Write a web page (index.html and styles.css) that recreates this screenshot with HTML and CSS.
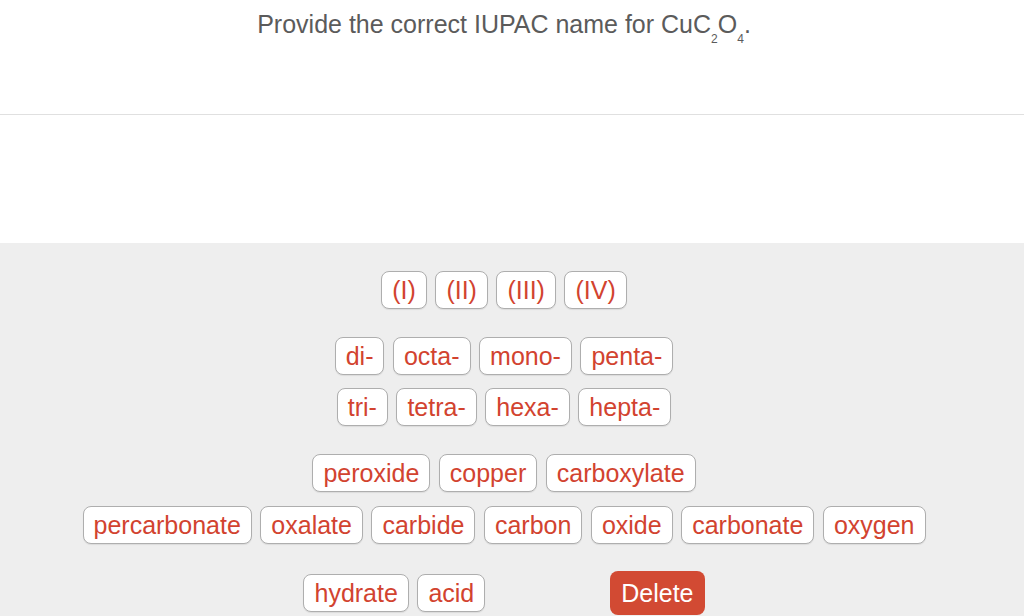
FILE: index.html
```html
<!DOCTYPE html>
<html lang="en">
  <head>
    <meta charset="UTF-8" />
    <title>IUPAC name</title>
    <link rel="stylesheet" href="styles.css">
  </head>
  <body>
    <!-- Question -->
    <div class="question">
      <p class="prompt">Provide the correct IUPAC name for CuC<sub>2</sub>O<sub>4</sub>.</p>
    </div>

    <!-- Answer drop area -->
    <div class="answer"></div>

    <!-- Tile palette -->
    <div class="palette">
      <div class="group">
        <div class="row">
          <span class="tile">(I)</span>
          <span class="tile">(II)</span>
          <span class="tile">(III)</span>
          <span class="tile">(IV)</span>
        </div>
      </div>

      <div class="group">
        <div class="row">
          <span class="tile">di-</span>
          <span class="tile">octa-</span>
          <span class="tile">mono-</span>
          <span class="tile">penta-</span>
        </div>
        <div class="row">
          <span class="tile">tri-</span>
          <span class="tile">tetra-</span>
          <span class="tile">hexa-</span>
          <span class="tile">hepta-</span>
        </div>
      </div>

      <div class="group group-names">
        <div class="row">
          <span class="tile">peroxide</span>
          <span class="tile">copper</span>
          <span class="tile">carboxylate</span>
        </div>
        <div class="row">
          <span class="tile">percarbonate</span>
          <span class="tile">oxalate</span>
          <span class="tile">carbide</span>
          <span class="tile">carbon</span>
          <span class="tile">oxide</span>
          <span class="tile">carbonate</span>
          <span class="tile">oxygen</span>
        </div>
      </div>

      <div class="group group-last">
        <div class="row">
          <span class="tile">hydrate</span>
          <span class="tile">acid</span>
        </div>
        <button class="delete">Delete</button>
      </div>
    </div>
  </body>
</html>
```

FILE: styles.css
```css
* {
  margin: 0;
  padding: 0;
  box-sizing: border-box;
}

html,
body {
  height: 100%;
}

body {
  display: flex;
  flex-direction: column;
  font-family: 'Liberation Sans', Arial, sans-serif;
  background-color: #fff;
  overflow: hidden;
}

/* Question text at the top */
.question {
  flex-shrink: 0;
  height: 115px;
  border-bottom: 1px solid #e0e0e0;
  padding-right: 16px;
  text-align: center;
}

.prompt {
  padding-top: 9px;
  font-size: 25px;
  line-height: 30px;
  color: #5b5b5b;
}

.prompt sub {
  font-size: 12px;
  vertical-align: -10px;
  line-height: 0;
}

.answer {
  flex-shrink: 0;
  height: 128px;
}

/* Grey area holding the tiles */
.palette {
  flex: 1 0 auto;
  padding: 28px 16px 0 0;
  background: linear-gradient(#eeeeee calc(100% - 22px), #e4e4e4);
}

.group {
  display: flex;
  flex-direction: column;
  align-items: center;
  gap: 13px;
  margin-bottom: 28px;
}

.group-names {
  gap: 14px;
  margin-bottom: 27px;
}

.group-last {
  flex-direction: row;
  justify-content: center;
  gap: 125px;
}

.row {
  display: flex;
  justify-content: center;
  gap: 8.5px;
}

.tile {
  display: inline-block;
  height: 38px;
  padding: 0 10px;
  border: 1px solid #aeaeae;
  border-radius: 8px;
  background-color: #fff;
  box-shadow: 0 1px 1px rgba(0, 0, 0, 0.08);
  color: #d2432f;
  font-size: 25px;
  line-height: 36px;
  white-space: nowrap;
}

.delete {
  height: 44px;
  padding: 0 11px;
  border: none;
  border-radius: 8px;
  background-color: #d24a33;
  color: #fff;
  font-family: 'Liberation Sans', Arial, sans-serif;
  font-size: 25px;
  line-height: 44px;
}
```
